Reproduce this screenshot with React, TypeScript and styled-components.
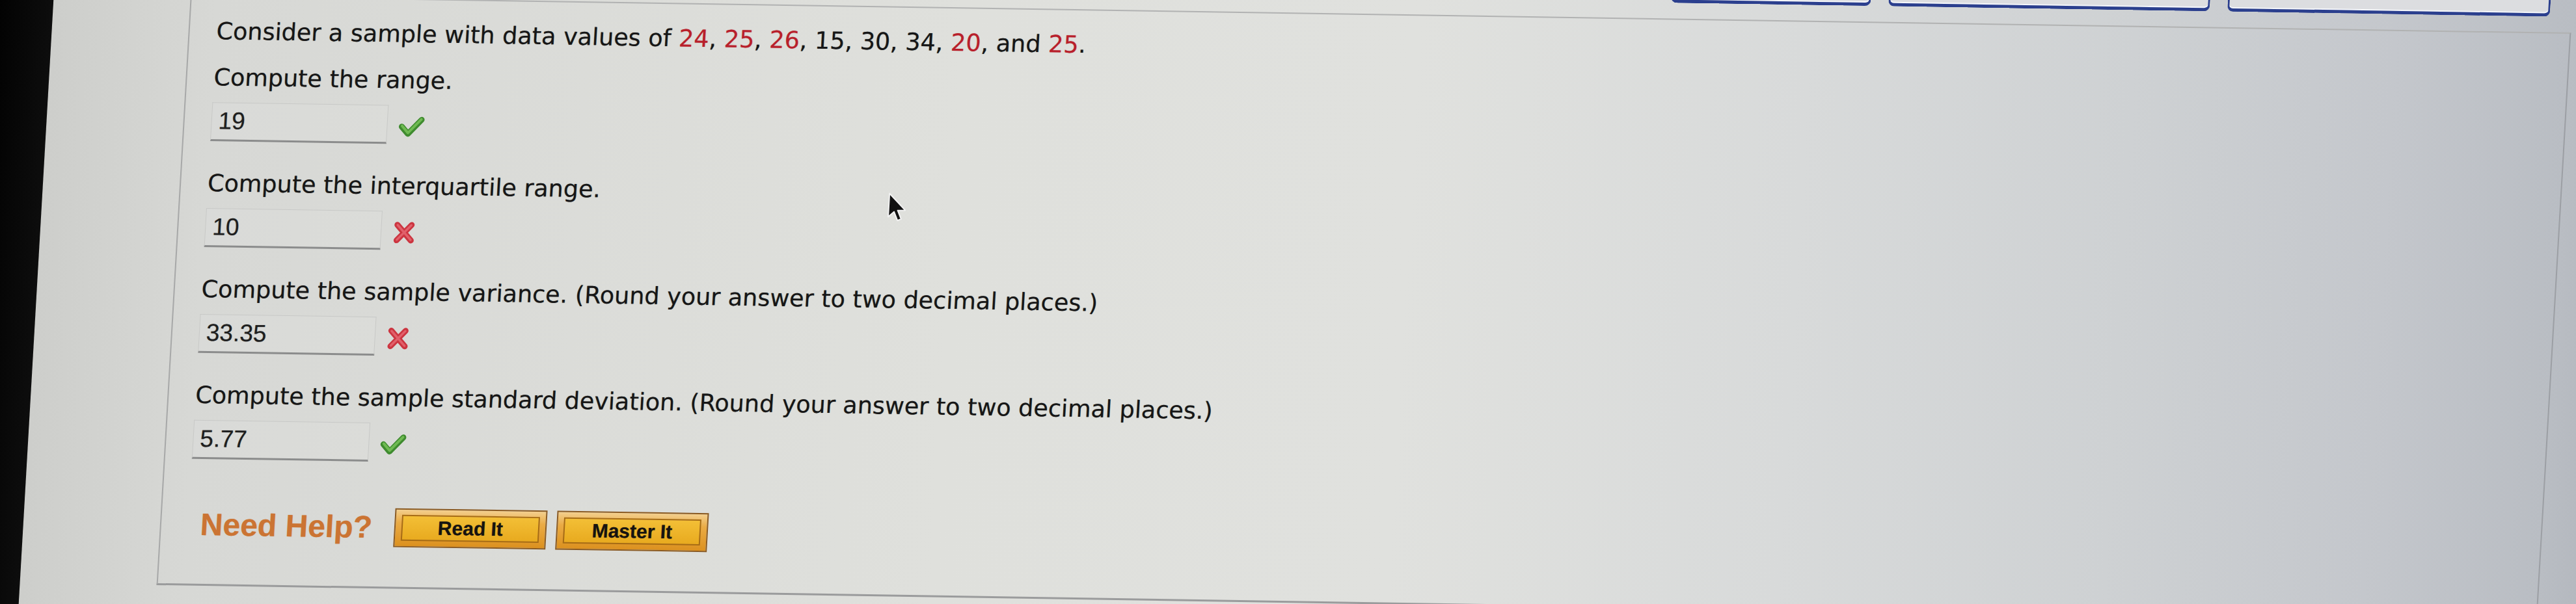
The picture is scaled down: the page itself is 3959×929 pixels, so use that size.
import React from "react";
import styled, { createGlobalStyle } from "styled-components";

const Global = createGlobalStyle`
  html, body { margin: 0; padding: 0; background: #000; overflow: hidden; }
  #root { width: 3959px; height: 929px; }
`;

const Viewport = styled.div`
  width: 3959px;
  height: 929px;
  overflow: hidden;
  background: #000;
`;

/* the whole screen, tilted slightly like the photo */
const Photo = styled.div`
  width: 4100px;
  height: 1010px;
  display: flex;
  transform-origin: 0 0;
  transform: translate(0, -66px) rotate(0.9deg) skewX(-2.4deg);
`;

const Bezel = styled.div`
  flex: none;
  width: 86px;
  background: linear-gradient(to right, #020202, #0d0d0d);
`;

const Screen = styled.div`
  flex: 1;
  display: flex;
  flex-direction: column;
  padding-left: 210px;
  background: linear-gradient(
    to right,
    #cdcecb 0px,
    #d7d8d5 250px,
    #dfe0dc 1400px,
    #e0e1de 2100px,
    #d8dada 2700px,
    #ced1d3 3200px,
    #c4c7cc 3600px,
    #b9bdc3 3870px,
    #aeb2b9 4014px
  );
`;

const Toolbar = styled.div`
  flex: none;
  height: 54px;
  display: flex;
  justify-content: flex-end;
  align-items: flex-start;
  gap: 27px;
  padding-right: 179px;
`;

const TabButton = styled.div<{ $w: number }>`
  width: ${(p) => p.$w}px;
  height: 30px;
  box-sizing: border-box;
  background: #dcdde0;
  border: 3px solid #2b3f8e;
  border-top: none;
  border-bottom-width: 5px;
  border-radius: 0 0 9px 9px;
  box-shadow: inset 0 -2px 0 #f4f6fb;
`;

const Panel = styled.section`
  position: relative;
  flex: none;
  height: 908px;
  margin-right: 145px;
  box-sizing: border-box;
  border: 2px solid #a7a8a8;
  border-top-color: #b1b2b2;
  border-right-color: #9c9fa4;
  border-bottom: 3px solid #9a9b9c;
  padding: 31px 0 61px 41px;
  display: flex;
  flex-direction: column;
  font-family: "DejaVu Sans", Verdana, sans-serif;
  color: #161616;
  text-shadow: 0 0 1px rgba(0, 0, 0, 0.45);
`;

const Intro = styled.p`
  margin: 0 0 27px;
  font-size: 36.5px;
  line-height: 44px;
  white-space: nowrap;
`;

const Num = styled.span<{ $red?: boolean }>`
  color: ${(p) => (p.$red ? "#b81f2b" : "inherit")};
  text-shadow: ${(p) =>
    p.$red ? "0 0 1px rgba(184, 31, 43, 0.5)" : "inherit"};
`;

const Questions = styled.div`
  display: flex;
  flex-direction: column;
  gap: 43px;
`;

const Question = styled.div`
  display: flex;
  flex-direction: column;
  gap: 16px;
`;

const Label = styled.div`
  font-size: 36.5px;
  line-height: 44px;
  white-space: nowrap;
`;

const AnswerRow = styled.div`
  display: flex;
  align-items: center;
  gap: 16px;
`;

const AnswerBox = styled.div`
  width: 271px;
  height: 60px;
  box-sizing: border-box;
  display: flex;
  align-items: center;
  padding-left: 10px;
  border: 1px solid #c8c9c7;
  border-bottom: 3px solid #8b8c8c;
  background: rgba(255, 255, 255, 0.07);
  font-family: "Liberation Sans", Arial, sans-serif;
  font-size: 37px;
  color: #1e1e1e;
`;

const Mark = styled.svg<{ $dy: number }>`
  flex: none;
  margin-top: ${(p) => p.$dy}px;
`;

const HelpRow = styled.div`
  margin-top: 71px;
  height: 60px;
  display: flex;
  align-items: center;
  padding-left: 19px;
`;

const NeedHelp = styled.span`
  font-family: "Liberation Sans", Arial, sans-serif;
  font-weight: 700;
  font-size: 48px;
  line-height: 1;
  color: #cb7433;
  text-shadow: 0 0 1px rgba(203, 116, 51, 0.6);
  margin-right: 34px;
  white-space: nowrap;
`;

const ButtonGroup = styled.div`
  display: flex;
  gap: 15px;
`;

const HelpButton = styled.div<{ $w: number }>`
  width: ${(p) => p.$w}px;
  height: 60px;
  box-sizing: border-box;
  display: flex;
  padding: 8px 9px 8px 9px;
  border: 2px solid #8a5a22;
  background: linear-gradient(#f3cf8e 0%, #eaab45 35%, #dc911f 100%);
`;

const HelpFace = styled.div`
  flex: 1;
  display: flex;
  align-items: center;
  justify-content: center;
  border: 2px solid #a66c15;
  background: linear-gradient(#f3bf36, #e8aa1f);
  font-family: "Liberation Sans", Arial, sans-serif;
  font-weight: 700;
  font-size: 30px;
  color: #161310;
  text-shadow: 0 0 1px rgba(0, 0, 0, 0.5);
  white-space: nowrap;
`;

const Pointer = styled.svg`
  position: absolute;
  left: 1087px;
  top: 284px;
`;

const CheckMark = () => (
  <Mark $dy={6} width="42" height="36" viewBox="0 0 42 36">
    <path
      d="M6 18 L16 29 L36 7"
      fill="none"
      stroke="#3f8b2f"
      strokeWidth="9"
      strokeLinecap="round"
      strokeLinejoin="round"
    />
    <path
      d="M6.5 17 L16 27.5 L35.5 6.5"
      fill="none"
      stroke="#6fba52"
      strokeWidth="4"
      strokeLinecap="round"
      strokeLinejoin="round"
    />
  </Mark>
);

const CrossMark = () => (
  <Mark $dy={5} width="38" height="38" viewBox="0 0 38 38">
    <path
      d="M8 7 L30 31 M30 7 L8 31"
      fill="none"
      stroke="#cc3540"
      strokeWidth="9"
      strokeLinecap="round"
    />
    <path
      d="M8.5 7.5 L29.5 30 M29.5 7.5 L8.5 30"
      fill="none"
      stroke="#e1606a"
      strokeWidth="3.5"
      strokeLinecap="round"
    />
  </Mark>
);

type Item = { label: string; value: string; ok: boolean };

const items: Item[] = [
  { label: "Compute the range.", value: "19", ok: true },
  { label: "Compute the interquartile range.", value: "10", ok: false },
  {
    label:
      "Compute the sample variance. (Round your answer to two decimal places.)",
    value: "33.35",
    ok: false,
  },
  {
    label:
      "Compute the sample standard deviation. (Round your answer to two decimal places.)",
    value: "5.77",
    ok: true,
  },
];

const data: { v: string; red: boolean }[] = [
  { v: "24", red: true },
  { v: "25", red: true },
  { v: "26", red: true },
  { v: "15", red: false },
  { v: "30", red: false },
  { v: "34", red: false },
  { v: "20", red: true },
];

export default function App() {
  return (
    <>
      <Global />
      <Viewport>
        <Photo>
          <Bezel />
          <Screen>
            <Toolbar>
              <TabButton $w={307} />
              <TabButton $w={494} />
              <TabButton $w={496} />
            </Toolbar>
            <Panel>
              <Intro>
                Consider a sample with data values of{" "}
                {data.map((d) => (
                  <React.Fragment key={d.v + d.red}>
                    <Num $red={d.red}>{d.v}</Num>,{" "}
                  </React.Fragment>
                ))}
                and <Num $red>25</Num>.
              </Intro>
              <Questions>
                {items.map((it) => (
                  <Question key={it.label}>
                    <Label>{it.label}</Label>
                    <AnswerRow>
                      <AnswerBox>{it.value}</AnswerBox>
                      {it.ok ? <CheckMark /> : <CrossMark />}
                    </AnswerRow>
                  </Question>
                ))}
              </Questions>
              <HelpRow>
                <NeedHelp>Need Help?</NeedHelp>
                <ButtonGroup>
                  <HelpButton $w={234}>
                    <HelpFace>Read It</HelpFace>
                  </HelpButton>
                  <HelpButton $w={233}>
                    <HelpFace>Master It</HelpFace>
                  </HelpButton>
                </ButtonGroup>
              </HelpRow>
              <Pointer width="30" height="46" viewBox="0 0 30 46">
                <path
                  d="M2 2 L2 38 L10.5 30 L16.5 43.5 L22 41 L16 28 L27.5 27.5 Z"
                  fill="#111"
                  stroke="#f2f2f2"
                  strokeWidth="2"
                  strokeLinejoin="round"
                />
              </Pointer>
            </Panel>
          </Screen>
        </Photo>
      </Viewport>
    </>
  );
}
